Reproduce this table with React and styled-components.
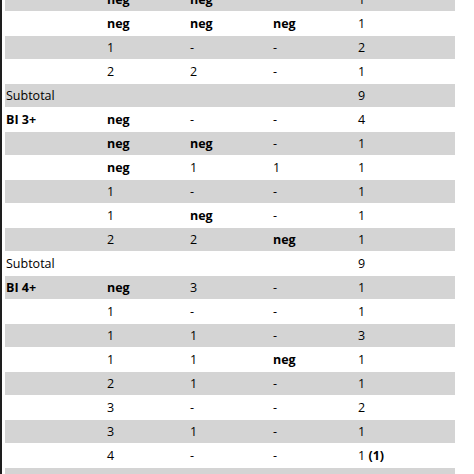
import React from "react";
import styled, { createGlobalStyle } from "styled-components";

const Global = createGlobalStyle`
  html, body { margin: 0; padding: 0; background: #fff; }
  body { font-family: "Open Sans", "Noto Sans", sans-serif; color: #000; overflow: hidden; }
`;

const Page = styled.div`
  height: 474px;
  overflow: hidden;
  border-left: 2px solid #1e1e1e;
  padding-left: 3px;
`;

const Table = styled.div`
  width: 450px;
  display: flex;
  flex-direction: column;
  gap: 1px;
  margin-top: -12px;
`;

const Row = styled.div`
  display: grid;
  grid-template-columns: 101px 83px 83px 85px 1fr;
  align-items: center;
  height: 23px;
  padding-left: 1px;
  background: ${(p) => (p.$shaded ? "#d4d4d4" : "#fff")};
  font-size: 12.5px;
`;

const Cell = styled.span`
  font-weight: ${(p) => (p.$bold ? 700 : 400)};
  white-space: nowrap;
`;

const B = styled.b`
  font-weight: 700;
`;

const rows = [
  ["", "neg", "neg", "", "1"],
  ["", "neg", "neg", "neg", "1"],
  ["", "1", "-", "-", "2"],
  ["", "2", "2", "-", "1"],
  ["Subtotal", "", "", "", "9"],
  ["BI 3+", "neg", "-", "-", "4"],
  ["", "neg", "neg", "-", "1"],
  ["", "neg", "1", "1", "1"],
  ["", "1", "-", "-", "1"],
  ["", "1", "neg", "-", "1"],
  ["", "2", "2", "neg", "1"],
  ["Subtotal", "", "", "", "9"],
  ["BI 4+", "neg", "3", "-", "1"],
  ["", "1", "-", "-", "1"],
  ["", "1", "1", "-", "3"],
  ["", "1", "1", "neg", "1"],
  ["", "2", "1", "-", "1"],
  ["", "3", "-", "-", "2"],
  ["", "3", "1", "-", "1"],
  ["", "4", "-", "-", "1 (1)"],
  ["", "", "", "", ""],
];

const isBold = (v, i) => v === "neg" || (i === 0 && v.startsWith("BI"));

export default function App() {
  return (
    <>
      <Global />
      <Page>
        <Table>
          {rows.map((r, ri) => (
            <Row key={ri} $shaded={ri % 2 === 0}>
              {r.map((v, ci) => (
                <Cell key={ci} $bold={isBold(v, ci)}>
                  {v === "1 (1)" ? (
                    <>
                      1 <B>(1)</B>
                    </>
                  ) : (
                    v
                  )}
                </Cell>
              ))}
            </Row>
          ))}
        </Table>
      </Page>
    </>
  );
}
